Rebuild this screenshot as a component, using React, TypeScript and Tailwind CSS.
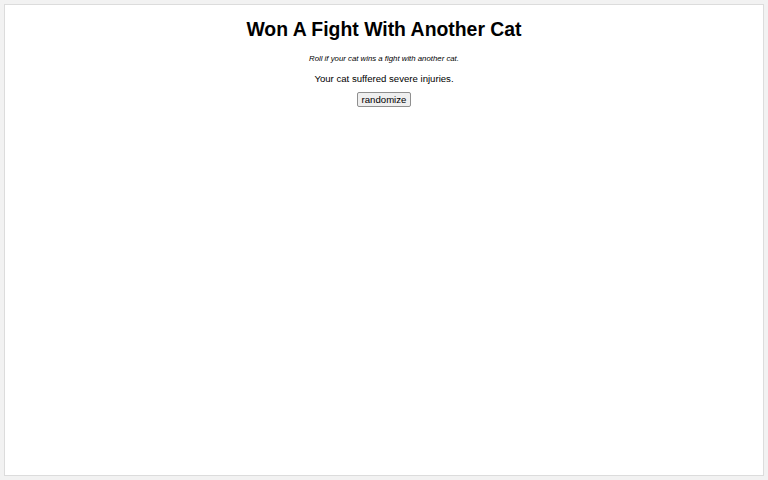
import { useState } from "react";

const outcomes = [
  "Your cat suffered severe injuries.",
  "Your cat came away with a few scratches.",
  "Your cat won without a scratch.",
  "Your cat lost an ear tip but won the day.",
];

export default function App() {
  const [result, setResult] = useState(outcomes[0]);

  const roll = () => {
    setResult(outcomes[Math.floor(Math.random() * outcomes.length)]);
  };

  return (
    <div
      className="h-[480px] w-[768px] bg-[#f2f2f2] p-[4px]"
      style={{ fontFamily: '"Liberation Sans", Arial, sans-serif' }}
    >
      <div className="flex h-full flex-col items-center border border-[#dcdcdc] bg-white pt-[15px]">
        <h1 className="text-[19.4px] font-bold leading-[18px] text-black">
          Won A Fight With Another Cat
        </h1>
        <p className="mt-[16px] text-[7.8px] italic leading-[9px] text-black">
          Roll if your cat wins a fight with another cat.
        </p>
        <p className="mt-[10px] text-[9.6px] leading-[11px] text-black">{result}</p>
        <button
          onClick={roll}
          className="mt-[8px] h-[15px] rounded-[2px] border border-[#8f8f8f] bg-[#efefef] px-[4px] text-[9.6px] leading-[13px] text-black"
        >
          randomize
        </button>
      </div>
    </div>
  );
}
